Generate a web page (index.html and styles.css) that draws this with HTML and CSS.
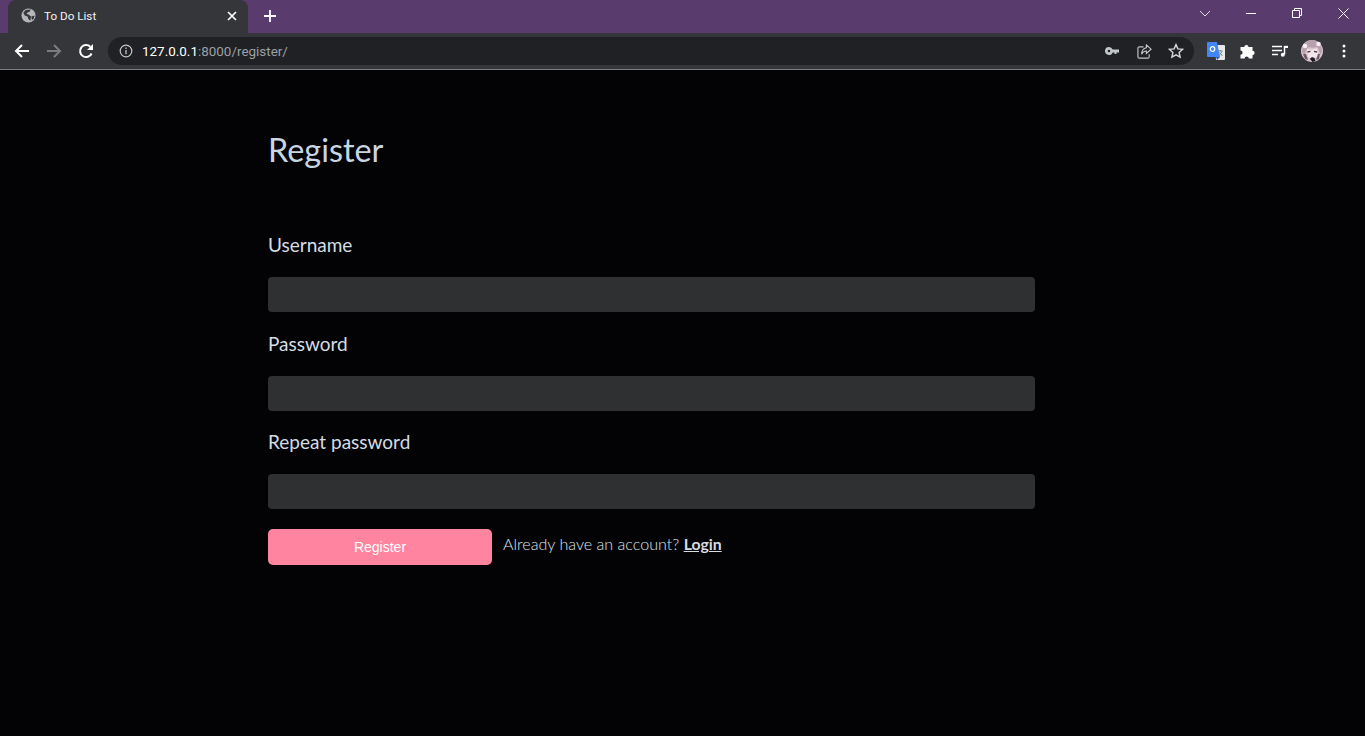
FILE: index.html
```html
<!DOCTYPE html>
<html lang="en">
<head>
<meta charset="utf-8">
<title>To Do List</title>
<link rel="stylesheet" href="styles.css">
</head>
<body>
<header class="browser">
  <div class="tabstrip">
    <div class="tab">
      <svg class="favicon" viewBox="0 0 16 16"><circle cx="8" cy="8" r="7.500" fill="#b4b6b9"/><path d="M5 2 2.500 5l1.500 3 3 1 1 3 2 1.500.7-4.500L8 7 6 6.500l.5-1.500L9 4l1.500-2.500z" fill="#35363a"/><path d="M11 9l3.500-1-.8 3-2 2z" fill="#35363a"/></svg>
      <span class="tab-title">To Do List</span>
      <svg class="tab-close" viewBox="0 0 10 10"><path d="M1 1l8 8M9 1l-8 8" stroke="#fff" stroke-width="1.700" fill="none"/></svg>
    </div>
    <svg class="newtab" viewBox="0 0 12 12"><path d="M6 0v12M0 6h12" stroke="#fff" stroke-width="1.800" fill="none"/></svg>
    <div class="window-controls">
      <svg class="wc-chevron" viewBox="0 0 12 7"><path d="M1 1l5 5 5-5" stroke="#e0dce4" fill="none"/></svg>
      <svg class="wc-min" viewBox="0 0 10 1"><path d="M0 .5h10" stroke="#fff" fill="none"/></svg>
      <svg class="wc-max" viewBox="0 0 10 10"><path d="M.5 2.500h7v7h-7zM2.500 2.500v-2h7v7h-2" stroke="#fff" fill="none"/></svg>
      <svg class="wc-close" viewBox="0 0 11 11"><path d="M.5.5l10 10M10.500.5l-10 10" stroke="#fff" fill="none"/></svg>
    </div>
  </div>
  <div class="toolbar">
    <svg class="nav nav-back" viewBox="0 0 16 16"><path d="M15 8H2M8 2 2 8l6 6" stroke="#fff" stroke-width="2" fill="none"/></svg>
    <svg class="nav nav-forward" viewBox="0 0 16 16"><path d="M1 8h13M8 2l6 6-6 6" stroke="#7b7c7f" stroke-width="2" fill="none"/></svg>
    <svg class="nav nav-reload" viewBox="0 0 16 16"><path d="M13.600 10.500A6 6 0 1 1 12.300 3.800" stroke="#fff" stroke-width="2" fill="none"/><path d="M15 1v6H9z" fill="#fff"/></svg>
    <div class="omnibox">
      <svg class="info" viewBox="0 0 14 14"><circle cx="7" cy="7" r="5.800" stroke="#c4c6c9" stroke-width="1.200" fill="none"/><path d="M7 6v4.200M7 3.500v1.500" stroke="#c4c6c9" stroke-width="1.300"/></svg>
      <span class="url"><span class="host">127.0.0.1</span>:8000/register/</span>
      <svg class="omni-icon icon-key" viewBox="0 0 14 8"><path d="M4 0a4 4 0 1 0 3.700 5.500H9.500V7h2V5.500H14v-3H7.700A4 4 0 0 0 4 0zm0 2.700a1.300 1.300 0 1 1 0 2.600 1.300 1.300 0 0 1 0-2.600z" fill="#c4c7ca" fill-rule="evenodd"/></svg>
      <svg class="omni-icon icon-share" viewBox="0 0 16 16"><path d="M7 3H2.500A1.500 1.500 0 0 0 1 4.500v9A1.500 1.500 0 0 0 2.500 15h9a1.500 1.500 0 0 0 1.500-1.500V11" stroke="#c4c7ca" stroke-width="1.200" fill="none"/><path d="M10 1l5 4.500L10 10V7.500C7.500 7.500 6 8.500 5 11c0-4 2-6.500 5-7z" stroke="#c4c7ca" stroke-width="1.200" fill="none"/></svg>
      <svg class="omni-icon icon-star" viewBox="0 0 16 16"><path d="M8 1.600l1.900 4.300 4.700.5-3.500 3.100 1 4.600L8 11.800l-4.100 2.300 1-4.600L1.400 6.400l4.700-.5z" stroke="#d6d8da" stroke-width="1.400" fill="none"/></svg>
    </div>
    <svg class="ext ext-translate" viewBox="0 0 18 18"><path d="M8 3h9a1 1 0 0 1 1 1v13a1 1 0 0 1-1 1H9z" fill="#e8e8e8"/><path d="M1 0h9l3 15H1a1 1 0 0 1-1-1V1a1 1 0 0 1 1-1z" fill="#4285f4"/><path d="M9 15h4l-3 3z" fill="#2a56c6"/><circle cx="5.500" cy="7" r="2.300" stroke="#fff" stroke-width="1.200" fill="none"/><path d="M11.500 9h4M13.500 8v1M12 14l3-4.500M12.500 10.500l3 3.500" stroke="#7a8a80" fill="none"/></svg>
    <svg class="ext ext-puzzle" viewBox="0 0 16 16"><path d="M.5 4h3.800a2.100 2.100 0 1 1 4.200 0H12.500v3.800a2.100 2.100 0 1 1 0 4.200V15.500H8.800a2.100 2.100 0 1 0-4.200 0H.5v-3.700a2.100 2.100 0 1 0 0-4.200z" fill="#fff"/></svg>
    <svg class="ext ext-media" viewBox="0 0 16 12"><path d="M0 1.500h10M0 5.500h10M0 9.500h6" stroke="#fff" stroke-width="1.400" fill="none"/><path d="M12.500 1v8.500" stroke="#fff" stroke-width="1.500" fill="none"/><circle cx="10.800" cy="9.700" r="2" fill="#fff"/><path d="M12.500 .8H16V3h-3.500z" fill="#fff"/></svg>
    <svg class="avatar" viewBox="0 0 22 22"><circle cx="11" cy="11" r="11" fill="#d9c4cf"/><path d="M1 12C1 4 6 0 11 0c6 0 10 5 10 12l-2 3c0-4-2-7-3-8-3 1-6 1-8 0-2 1-4 4-4 8z" fill="#b8a0ae"/><path d="M6 9c3 1 7 1 10-1l1 8-5 3-5-2z" fill="#f3e6ea"/><path d="M6.500 12l3-.7M13 11.300l3 .7" stroke="#4c3a44" stroke-width="1.300"/><path d="M9 19c1-2 3-2 4.500-1l1 3-3 1z" fill="#1e1a1e"/><circle cx="4" cy="6" r="2.300" fill="#f4eef2"/><circle cx="17.500" cy="4" r="2.300" fill="#f4eef2"/><path d="M2 14l2 5 3 1-2-6zM19 14l-1 5-3 1 2-6z" fill="#6f5a66"/></svg>
    <svg class="menu" viewBox="0 0 4 14"><circle cx="2" cy="2" r="1.500" fill="#fff"/><circle cx="2" cy="7" r="1.500" fill="#fff"/><circle cx="2" cy="12" r="1.500" fill="#fff"/></svg>
  </div>
</header>
<main class="page">
  <h1 class="title">Register</h1>
  <form class="form">
    <label class="field">
      <span class="field-label">Username</span>
      <input class="field-input" type="text">
    </label>
    <label class="field">
      <span class="field-label">Password</span>
      <input class="field-input" type="password">
    </label>
    <label class="field">
      <span class="field-label">Repeat password</span>
      <input class="field-input" type="password">
    </label>
    <div class="actions">
      <button class="submit" type="button">Register</button>
      <p class="login-note">Already have an account? <a class="login-link" href="#">Login</a></p>
    </div>
  </form>
</main>
</body>
</html>
```

FILE: styles.css
```css
* { box-sizing: border-box; }
html, body { margin: 0; height: 100%; }
body {
  background: #030306;
  color: #d4dce4;
  font-family: "Lato", "Open Sans", sans-serif;
  overflow: hidden;
}
.browser { height: 70px; border-bottom: 1px solid #7d7e80; }
.tabstrip {
  height: 33px;
  background: #5a3b6e;
  display: flex;
  align-items: flex-start;
}
.tab {
  width: 240px;
  height: 33px;
  margin-left: 8px;
  background: #35363a;
  border-radius: 8px 8px 0 0;
  display: flex;
  align-items: center;
  padding: 0 11px 2px 13px;
}
.favicon { width: 15px; height: 15px; flex: none; }
.tab-title {
  margin-left: 8px;
  flex: 1;
  font: 11.7px "Roboto", sans-serif;
  color: #f1f3f4;
}
.tab-close { width: 10px; height: 10px; }
.newtab { width: 12px; height: 12px; margin: 10px 0 0 16px; }
.window-controls {
  margin-left: auto;
  display: flex;
  align-items: center;
  height: 26px;
}
.wc-chevron { width: 12px; height: 7px; margin-right: 35px; }
.wc-min { width: 10px; height: 1px; margin-right: 36px; }
.wc-max { width: 10px; height: 10px; margin-right: 36px; }
.wc-close { width: 11px; height: 11px; margin-right: 16px; }
.toolbar {
  height: 36px;
  background: #35363a;
  display: flex;
  align-items: center;
  padding: 0 0 0 14px;
}
.nav { width: 16px; height: 16px; flex: none; }
.nav-forward { margin-left: 16px; }
.nav-reload { margin-left: 16px; }
.omnibox {
  margin-left: 14px;
  width: 1086px;
  height: 28px;
  border-radius: 14px;
  background: #202124;
  display: flex;
  align-items: center;
  padding: 0 10px 0 11px;
}
.info { width: 14px; height: 14px; flex: none; }
.url {
  margin-left: 9px;
  flex: 1;
  font: 13.45px "Roboto", sans-serif;
  color: #9aa0a6;
}
.host { color: #fff; }
.omni-icon { flex: none; }
.icon-key { width: 14px; height: 8px; }
.icon-share { width: 15px; height: 15px; margin-left: 18px; }
.icon-star { width: 16px; height: 16px; margin-left: 16px; }
.ext { flex: none; }
.ext-translate { width: 18px; height: 18px; margin-left: 13px; }
.ext-puzzle { width: 16px; height: 16px; margin-left: 15px; }
.ext-media { width: 16px; height: 12px; margin-left: 16px; }
.avatar { width: 22px; height: 22px; margin-left: 13px; flex: none; }
.menu { width: 4px; height: 14px; margin-left: 19px; flex: none; }
.page {
  width: 767px;
  margin-left: 268px;
}
.title {
  margin: 0;
  padding-top: 58px;
  font-size: 32.400px;
  line-height: 44px;
  font-weight: 400;
  color: #c9d6e2;
}
.form { margin-top: 58px; }
.field { display: block; margin-bottom: 16.500px; }
.field-label {
  display: block;
  font-size: 19px;
  line-height: 30px;
  height: 30px;
  color: #d4dce4;
}
.field-input {
  display: block;
  margin-top: 17px;
  width: 100%;
  height: 35px;
  background: #2f3032;
  border: 0;
  border-radius: 4px;
}
.actions {
  display: flex;
  align-items: center;
  margin-top: 20px;
}
.submit {
  width: 224px;
  height: 36px;
  border: 0;
  border-radius: 5px;
  background: #ff84a0;
  color: #fff;
  font: 14px "Liberation Sans", sans-serif;
}
.login-note {
  margin: 0 0 7px 11px;
  font-size: 16.100px;
  font-weight: 300;
  color: #dbe3ec;
}
.login-link {
  font-size: 15.800px;
  color: #d4dce4;
  font-weight: 700;
}
```
